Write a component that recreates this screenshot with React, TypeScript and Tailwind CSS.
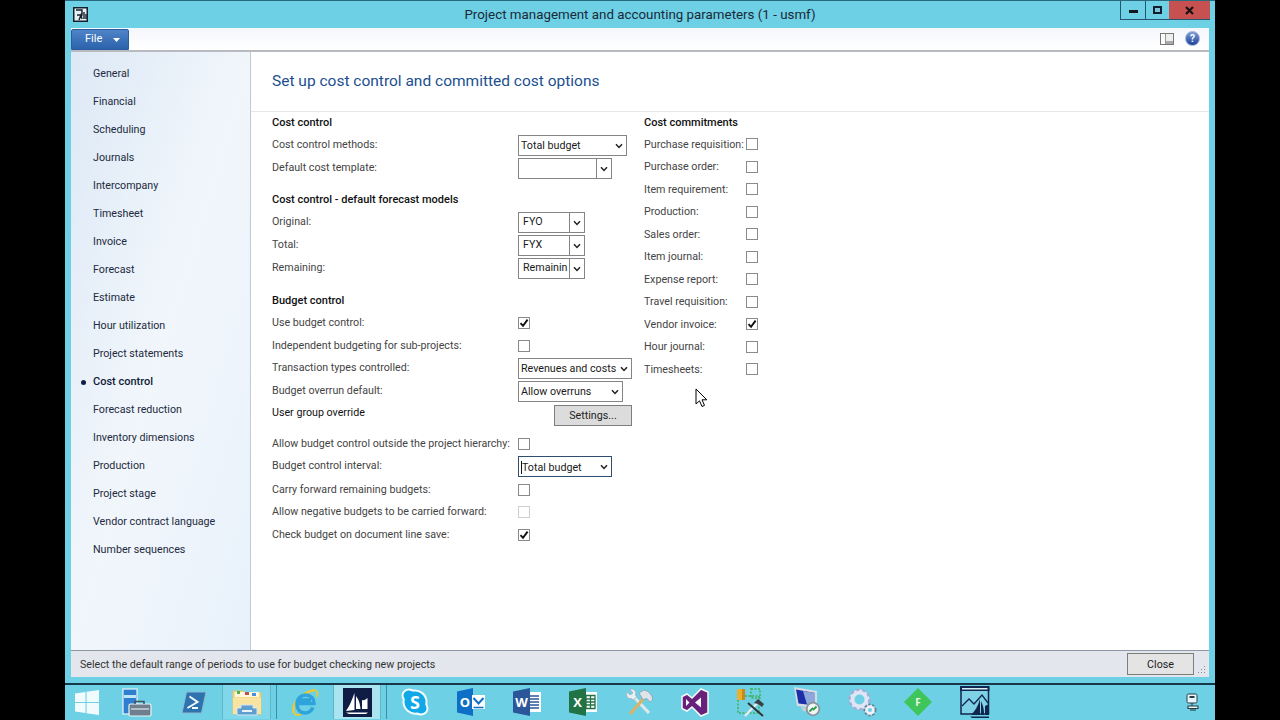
import React from "react";

const font = "font-['Roboto','Open_Sans',sans-serif]";

const sideItems = [
  "General",
  "Financial",
  "Scheduling",
  "Journals",
  "Intercompany",
  "Timesheet",
  "Invoice",
  "Forecast",
  "Estimate",
  "Hour utilization",
  "Project statements",
  "Cost control",
  "Forecast reduction",
  "Inventory dimensions",
  "Production",
  "Project stage",
  "Vendor contract language",
  "Number sequences",
];

const commitments: [string, boolean][] = [
  ["Purchase requisition:", false],
  ["Purchase order:", false],
  ["Item requirement:", false],
  ["Production:", false],
  ["Sales order:", false],
  ["Item journal:", false],
  ["Expense report:", false],
  ["Travel requisition:", false],
  ["Vendor invoice:", true],
  ["Hour journal:", false],
  ["Timesheets:", false],
];

function Chevron() {
  return (
    <svg width="8" height="6" viewBox="0 0 8 6" className="shrink-0">
      <path d="M1 1.2 L4 4.4 L7 1.2" fill="none" stroke="#222" strokeWidth="1.5" />
    </svg>
  );
}

function Check({ checked, disabled }: { checked?: boolean; disabled?: boolean }) {
  return (
    <div
      className={
        "w-[12px] h-[12px] border bg-white flex items-center justify-center shrink-0 " +
        (disabled ? "border-[#d0d0d0]" : "border-[#8a8a8a]")
      }
    >
      {checked && (
        <svg width="10" height="10" viewBox="0 0 10 10">
          <path d="M1.5 5.2 L4 7.8 L8.6 1.6" fill="none" stroke="#111" strokeWidth="1.9" />
        </svg>
      )}
    </div>
  );
}

// plain dropdown, arrow only
function Select({ text, w, focus }: { text: string; w: string; focus?: boolean }) {
  return (
    <div
      className={
        "h-[21px] border bg-white flex items-center justify-between pl-[2px] pr-[3px] text-[#1a1a1a] whitespace-nowrap " +
        w +
        (focus ? " border-[#2e4f6e]" : " border-[#858585]")
      }
    >
      {focus ? (
        <span className="border-l border-[#111] leading-[13px] mt-[2px]">{text}</span>
      ) : (
        <span className="mt-[2px]">{text}</span>
      )}
      <Chevron />
    </div>
  );
}

// lookup field, with the split before the arrow
function Lookup({ text, w, input }: { text: string; w: string; input: string }) {
  return (
    <div className={"h-[21px] border border-[#858585] bg-white flex items-center text-[#1a1a1a] " + w}>
      <div className={"pl-[4px] whitespace-nowrap " + input}>{text}</div>
      <div className="h-full border-l border-[#858585] flex-1 flex items-center justify-center">
        <Chevron />
      </div>
    </div>
  );
}

function Row({ label, children, className }: { label: string; children: React.ReactNode; className?: string }) {
  return (
    <div className={"h-[21px] flex items-center " + (className || "")}>
      <div className="w-[246px] text-[#444] whitespace-nowrap pt-[1px]">{label}</div>
      {children}
    </div>
  );
}

function ComboRow({ label, children }: { label: string; children: React.ReactNode }) {
  return (
    <div className="h-[21px] flex items-center">
      <div className="w-[246px] text-[#444] whitespace-nowrap">{label}</div>
      {children}
    </div>
  );
}

function Heading({ text, className }: { text: string; className?: string }) {
  return <div className={"h-[21px] pt-[1px] flex items-center font-medium text-[11px] text-[#111] " + (className || "")}>{text}</div>;
}

/* ---------- taskbar icons ---------- */

const StartIcon = () => (
  <svg width="24" height="25" viewBox="0 0 24 25">
    <path d="M0 3.6 10.5 2V12H0ZM11.6 1.8 24 0V12H11.6ZM0 13.1H10.5V23L0 21.5ZM11.6 13.1H24V25L11.6 23.2Z" fill="#f1fafd" />
  </svg>
);

const ServerIcon = () => (
  <svg width="30" height="29" viewBox="0 0 30 29">
    <rect x="1" y="1" width="14" height="25" fill="#2f7fd0" stroke="#e8f6fb" strokeWidth="1.2" />
    <rect x="2" y="7" width="12" height="3" fill="#bfe6f5" />
    <rect x="7" y="16" width="22" height="12" rx="1.5" fill="#6f7f8e" stroke="#e8f6fb" strokeWidth="1.2" />
    <path d="M13 16V13.5H22V16" fill="none" stroke="#44525e" strokeWidth="1.5" />
    <path d="M9 21H27" stroke="#dfe6ea" strokeWidth="1.2" />
  </svg>
);

const PowerShellIcon = () => (
  <svg width="26" height="23" viewBox="0 0 26 23">
    <path d="M5.5 1H25L20.5 22H1Z" fill="#2e73ad" stroke="#8fb8d6" strokeWidth="1" />
    <path d="M8.5 5.5 16.5 11 6.5 17M11 17H17" fill="none" stroke="#f2fbff" strokeWidth="2" />
  </svg>
);

const ExplorerIcon = () => (
  <svg width="30" height="28" viewBox="0 0 30 28">
    <path d="M1 3H11L13 5H29V26H1Z" fill="#f6dc8c" stroke="#e1c66e" />
    <rect x="3" y="4" width="24" height="5" fill="#fff8dc" />
    <rect x="5" y="3" width="3" height="3" fill="#4caf50" />
    <rect x="13" y="4" width="4" height="3" fill="#c0504d" />
    <rect x="20" y="5" width="4" height="3" fill="#4a90d9" />
    <path d="M1 10H29V26H1Z" fill="#f9e3a0" />
    <path d="M5 27V20H9V17H21V20H25V27Z" fill="#5f9fd0" stroke="#cfe6f4" />
    <rect x="10" y="22" width="10" height="2" fill="#e6f3fb" />
  </svg>
);

const IEIcon = () => (
  <svg width="28" height="29" viewBox="0 0 28 29">
    <path d="M3 25C0 18 8 5 24 2" fill="none" stroke="#e8c93a" strokeWidth="2.5" />
    <path d="M24 2C27 3 27 7 25.5 9M3 25C5 28 9 27 12 25" fill="none" stroke="#e8c93a" strokeWidth="1.8" />
    <path d="M22 19.5C20 23.5 17 25 14 25C9 25 6 21 6 16C6 10.5 10 7 14.5 7C19.5 7 23 10.5 23 15.5H8M8 12H20" fill="none" stroke="#2ea3dc" strokeWidth="3.6" />
  </svg>
);

const DynamicsIcon = () => (
  <svg width="29" height="29" viewBox="0 0 29 29">
    <rect width="29" height="29" fill="#0f1d45" />
    <path d="M3 23C6 19 9 12 11.5 5V22ZM13 21V8C15 11 17 14 17.5 21ZM19 21V12C21 13 23 11.5 24.5 10V21Z" fill="#fff" />
    <path d="M3 24.5H25L23 26H6Z" fill="#fff" />
  </svg>
);

const SkypeIcon = () => (
  <svg width="28" height="28" viewBox="0 0 28 28">
    <path d="M8 1.5C10 1.5 11 2.3 12 2.6C18 1.5 25.5 6 25.5 14C25.5 15 25.3 15.6 25.3 16.5C26 18 26.5 19 26.5 20.5C26.5 24 23.5 26.5 20 26.5C18.5 26.5 17.4 26 16 25.5C9 26.5 2.5 21 2.5 14C2.5 13 2.7 12.2 2.8 11.3C2 10 1.5 9 1.5 7.5C1.5 4 4.5 1.5 8 1.5Z" fill="#10a8e6" stroke="#f2fbff" strokeWidth="2" />
    <text x="14" y="20.5" textAnchor="middle" fontSize="18" fontWeight="700" fill="#fff" fontFamily="Open Sans, sans-serif">S</text>
  </svg>
);

const OutlookIcon = () => (
  <svg width="28" height="28" viewBox="0 0 28 28">
    <path d="M16 0V28L0 24.5V3.5Z" fill="#0f6fc6" />
    <rect x="15" y="7" width="13" height="14" fill="#fff" />
    <path d="M16.5 10 21.5 15.5 26.5 10" fill="none" stroke="#0f6fc6" strokeWidth="2" />
    <path d="M16.5 19.5H26.5" stroke="#0f6fc6" strokeWidth="1.5" />
    <text x="8" y="19" textAnchor="middle" fontSize="13" fontWeight="700" fill="#fff" fontFamily="Open Sans, sans-serif">O</text>
  </svg>
);

const WordIcon = () => (
  <svg width="28" height="28" viewBox="0 0 28 28">
    <rect x="14" y="4" width="14" height="20" fill="#fff" />
    <path d="M17 8H26M17 11H26M17 14H26M17 17H26M17 20H26" stroke="#2b579a" strokeWidth="1.5" />
    <path d="M17 0V28L0 24.5V3.5Z" fill="#2b579a" />
    <text x="8.5" y="19" textAnchor="middle" fontSize="13" fontWeight="700" fill="#fff" fontFamily="Open Sans, sans-serif">W</text>
  </svg>
);

const ExcelIcon = () => (
  <svg width="28" height="28" viewBox="0 0 28 28">
    <rect x="14" y="4" width="14" height="20" fill="#fff" />
    <path d="M17 7.5H26V20.5H17ZM17 11H26M17 14H26M17 17H26M21.5 7.5V20.5" fill="none" stroke="#217346" strokeWidth="1.3" />
    <path d="M17 0V28L0 24.5V3.5Z" fill="#217346" />
    <text x="8.5" y="19" textAnchor="middle" fontSize="13" fontWeight="700" fill="#fff" fontFamily="Open Sans, sans-serif">X</text>
  </svg>
);

const ToolsIcon = () => (
  <svg width="28" height="28" viewBox="0 0 28 28">
    <path d="M8 8 24 25" stroke="#dfe7ec" strokeWidth="3.2" />
    <path d="M2 4 5 7 8 5 5 1.5C8 0 12 3 10.5 7.5L12 9 8 12 6.5 10.5C3 11.5 0.5 8 2 4Z" fill="#e9eff3" stroke="#9fb0ba" strokeWidth="0.8" />
    <path d="M5 26 20 9" stroke="#d9b366" strokeWidth="3.2" />
    <path d="M14 5 19 2 23 3.5 27 8 27.5 12 25 14 22 10.5 18 11.5Z" fill="#dde5ea" stroke="#8da0ac" strokeWidth="0.8" />
  </svg>
);

const VSIcon = () => (
  <svg width="28" height="29" viewBox="0 0 28 29">
    <path d="M20 1 27 4V25L20 28 11 19 6 23 1 20.5V8.5L6 6 11 10Z" fill="#68217a" stroke="#f4fbfd" strokeWidth="1.5" />
    <path d="M20 9.5 14 14.5 20 19.5ZM5 11V18L8.5 14.5Z" fill="#f4fbfd" />
  </svg>
);

const CubeToolIcon = () => (
  <svg width="29" height="29" viewBox="0 0 29 29">
    <rect x="1" y="8" width="21" height="17" fill="none" stroke="#3fae5a" strokeWidth="1.5" strokeDasharray="2 1.5" />
    <rect x="14" y="1" width="9" height="9" fill="none" stroke="#3fae5a" strokeWidth="1.5" strokeDasharray="2 1.5" />
    <rect x="0" y="1" width="8" height="11" rx="1.5" fill="#e8b02e" />
    <rect x="5" y="1" width="3" height="11" fill="#c88a14" />
    <path d="M8 28 22 13" stroke="#e8edf0" strokeWidth="2.4" />
    <path d="M11 15 26 28" stroke="#30343a" strokeWidth="2" />
    <path d="M17 15 21 11 27 16 25 19 21 16Z" fill="#3c4148" />
  </svg>
);

const RdpIcon = () => (
  <svg width="28" height="30" viewBox="0 0 28 30">
    <path d="M1 0 24 4V21L4 19Z" fill="#d6dde4" />
    <path d="M3 2.5 22 6V18.5L5.5 16.5Z" fill="#1c2fa8" />
    <path d="M10 4 22 6V18.5L14 17.5Z" fill="#8fa8da" />
    <path d="M8 20 18 21V25L10 24Z" fill="#c6cdd4" />
    <circle cx="20" cy="22" r="7.2" fill="#8a949c" />
    <circle cx="20" cy="22" r="5.4" fill="#f2f5f6" />
    <path d="M16.5 24.5 20 21M23.5 19.5 20 23" stroke="#2e9d45" strokeWidth="1.8" />
  </svg>
);

const GearsIcon = () => (
  <svg width="29" height="29" viewBox="0 0 29 29">
    <circle cx="11.5" cy="11.5" r="7.5" fill="none" stroke="#dfe5f4" strokeWidth="5" />
    <circle cx="11.5" cy="11.5" r="10" fill="none" stroke="#9fafd8" strokeWidth="2.6" strokeDasharray="3.4 2.8" />
    <circle cx="22" cy="22" r="3.6" fill="none" stroke="#eef2f8" strokeWidth="3" />
    <circle cx="22" cy="22" r="5.6" fill="none" stroke="#6d7f98" strokeWidth="1.8" strokeDasharray="2.2 1.8" />
  </svg>
);

const DiamondIcon = () => (
  <svg width="28" height="28" viewBox="0 0 28 28">
    <path d="M14 0 28 14 14 28 0 14Z" fill="#3fc65a" />
    <text x="14" y="17.5" textAnchor="middle" fontSize="10" fontWeight="700" fill="#eafbe9" fontFamily="Open Sans, sans-serif">F</text>
  </svg>
);

const ChartIcon = () => (
  <svg width="30" height="32" viewBox="0 0 30 32">
    <path d="M1 1.5H28.5V28H1Z" fill="#7fd2e6" stroke="#10264f" strokeWidth="1.5" />
    <rect x="0" y="0" width="29.5" height="5" fill="#10264f" />
    <rect x="2" y="2" width="25.5" height="1.5" fill="#d6eef5" />
    <path d="M2 20 9 13 14 18 22 9 28 17" fill="none" stroke="#10264f" strokeWidth="1.3" />
    <path d="M11 29C15 25 18 20 20 13V29ZM21 29V15C23 20 24 22 24 29ZM25 29V20L29 18V29Z" fill="#10264f" />
    <path d="M10 30.5H29V32H12Z" fill="#10264f" />
  </svg>
);

const TrayIcon = () => (
  <svg width="14" height="18" viewBox="0 0 14 18">
    <rect x="1" y="1" width="10" height="9" rx="1.5" fill="#e6f5f9" stroke="#2a3c44" />
    <rect x="3.5" y="3" width="5" height="2" fill="#2a3c44" />
    <path d="M6 10V13M2 13H12V15.5H2Z" fill="#e6f5f9" stroke="#2a3c44" strokeWidth="1.1" />
    <path d="M4 17H10" stroke="#2a3c44" strokeWidth="1.1" />
  </svg>
);

function Slot({ w, children, className }: { w: string; children: React.ReactNode; className?: string }) {
  return <div className={"h-full flex items-center justify-center shrink-0 " + w + " " + (className || "")}>{children}</div>;
}

export default function App() {
  return (
    <div className={"w-[1280px] h-[720px] bg-black flex justify-center overflow-hidden text-[10.7px] " + font}>
      <div className="relative w-[1150px] h-[720px] flex flex-col bg-[#6dd0e4]">
        {/* title bar */}
        <div className="h-[28px] flex items-start shrink-0 border-t border-[#2a6a80]">
          <div className="w-[95px] pl-[8px] pt-[6px]">
            <svg width="15" height="15" viewBox="0 0 15 15">
              <rect width="15" height="15" fill="#14202c" />
              <rect x="1.5" y="1.5" width="12" height="12" fill="#e8f0f4" />
              <path d="M3 3H9V8H4M6 13 8 8 9 12M11 5V12M13 7V12" fill="none" stroke="#14202c" strokeWidth="1.4" />
            </svg>
          </div>
          <div className="flex-1 text-center text-[13.35px] text-[#1a2a3a] pt-[4px] whitespace-nowrap">
            Project management and accounting parameters (1 - usmf)
          </div>
          <div className="flex h-[19px] pr-[5px]">
            <div className="w-[25px] border-b border-l border-[#23586c] flex items-center justify-center pt-[3px]">
              <div className="w-[9px] h-[3px] bg-[#10181e]" />
            </div>
            <div className="w-[24px] border-b border-l border-[#23586c] flex items-center justify-center">
              <div className="w-[9px] h-[8px] border-2 border-[#10202e] bg-[#7bc4dc]" />
            </div>
            <div className="w-[41px] bg-[#c75050] border-b border-[#23586c] flex items-center justify-center">
              <svg width="9" height="9" viewBox="0 0 9 9">
                <path d="M1 1 8 8M8 1 1 8" stroke="#1a1010" strokeWidth="2.2" />
              </svg>
            </div>
          </div>
        </div>

        {/* window body */}
        <div className="mx-[6px] flex-1 flex flex-col">
          <div className="h-[24px] shrink-0 bg-linear-to-b from-[#f4f7fc] to-[#ffffff] border-b-2 border-[#b7bbbf] flex items-start justify-between">
            <div className="w-[58px] h-[21px] mt-[1px] rounded-t-[2px] bg-linear-to-b from-[#4f84c8] to-[#2b62ab] border border-[#2c5d9f] flex items-center pl-[13px] text-white text-[11px]">
              File
              <svg width="7" height="4" viewBox="0 0 7 4" className="ml-[11px] mt-[1px]">
                <path d="M0 0H7L3.5 4Z" fill="#fff" />
              </svg>
            </div>
            <div className="flex items-center gap-[11px] pr-[9px] pt-[3px]">
              <div className="w-[14px] h-[12px] border border-[#777] bg-[#eee] flex">
                <div className="w-[5px] h-full bg-[#fafafa] border-r border-[#999]" />
                <div className="flex-1 flex items-end"><div className="w-full h-[3px] bg-[#aaa]" /></div>
              </div>
              <div className="w-[15px] h-[15px] rounded-full bg-linear-to-b from-[#7b9fd8] to-[#1f3f9a] border border-[#9fb2d0] flex items-center justify-center text-white font-bold text-[10px] leading-none">
                ?
              </div>
            </div>
          </div>

          <div className="h-[598px] shrink-0 flex bg-white">
            {/* left navigation */}
            <div className="w-[180px] shrink-0 border-r border-[#c3c9d0] pt-[8px] bg-linear-to-br from-[#dde9f6] via-[#f1f6fb] to-[#e8f1fb]">
              {sideItems.map((item) => (
                <div key={item} className="h-[28px] flex items-center text-[#1d2a40] pl-[22px]">
                  {item === "Cost control" ? (
                    <>
                      <div className="w-[5px] h-[5px] rounded-full bg-[#141e44] ml-[-12px] mr-[7px]" />
                      <span className="font-medium text-[11px] text-[#121c38] mt-[1px]">{item}</span>
                    </>
                  ) : (
                    <span className="mt-[1px]">{item}</span>
                  )}
                </div>
              ))}
            </div>

            {/* main form */}
            <div className="flex-1 flex flex-col">
              <div className="h-[60px] shrink-0 border-b border-[#e6e6e6] flex items-center pl-[21px] text-[15.5px] text-[#1b4f8f]">
                Set up cost control and committed cost options
              </div>
              <div className="flex pl-[21px]">
                <div className="w-[372px] shrink-0 flex flex-col gap-[2px]">
                  <Heading text="Cost control" />
                  <ComboRow label="Cost control methods:"><Select text="Total budget" w="w-[109px]" /></ComboRow>
                  <ComboRow label="Default cost template:"><Lookup text="" w="w-[94px]" input="w-[77px]" /></ComboRow>
                  <Heading text="Cost control - default forecast models" className="mt-[8px]" />
                  <ComboRow label="Original:"><Lookup text="FYO" w="w-[67px]" input="w-[50px]" /></ComboRow>
                  <ComboRow label="Total:"><Lookup text="FYX" w="w-[67px]" input="w-[50px]" /></ComboRow>
                  <ComboRow label="Remaining:"><Lookup text="Remainin" w="w-[67px]" input="w-[50px]" /></ComboRow>
                  <Heading text="Budget control" className="mt-[9px] !h-[20px] pt-[2px]" />
                  <Row label="Use budget control:"><Check checked /></Row>
                  <Row label="Independent budgeting for sub-projects:"><Check /></Row>
                  <ComboRow label="Transaction types controlled:"><Select text="Revenues and costs" w="w-[114px]" /></ComboRow>
                  <ComboRow label="Budget overrun default:"><Select text="Allow overruns" w="w-[105px]" /></ComboRow>
                  <div className="h-[21px] mt-[1px] flex items-start">
                    <div className="w-[282px] text-[#111]">User group override</div>
                    <button className="w-[78px] h-[21px] pt-[2px] bg-[#dcdcdc] border border-[#7d7d7d] text-[#222] text-center">Settings...</button>
                  </div>
                  <Row label="Allow budget control outside the project hierarchy:" className="mt-[5px]"><Check /></Row>
                  <ComboRow label="Budget control interval:"><Select text="Total budget" w="w-[94px]" focus /></ComboRow>
                  <Row label="Carry forward remaining budgets:"><Check /></Row>
                  <Row label="Allow negative budgets to be carried forward:" className="mt-[-1px]"><Check disabled /></Row>
                  <Row label="Check budget on document line save:"><Check checked /></Row>
                </div>
                <div className="flex flex-col">
                  <Heading text="Cost commitments" />
                  {commitments.map(([label, checked]) => (
                    <div key={label} className="h-[22.5px] flex items-center">
                      <div className="w-[102px] text-[#444] whitespace-nowrap pt-[1px]">{label}</div>
                      <Check checked={checked} />
                    </div>
                  ))}
                </div>
              </div>
            </div>
          </div>

          {/* status bar */}
          <div className="h-[27px] shrink-0 bg-[#e3e7ed] border-t border-[#8c98a6] flex items-center justify-between pl-[9px] text-[#333]">
            <span className="mt-[2px]">Select the default range of periods to use for budget checking new projects</span>
            <div className="flex items-end h-full">
              <button className="w-[67px] h-[22px] mb-[2px] pt-[2px] bg-[#e4e4e4] border border-[#7d7d7d] text-[#222] text-center">Close</button>
              <svg width="15" height="24" viewBox="0 0 15 24" className="mb-[1px]">
                <path d="M10 20h1v1h-1zM7 20h1v1H7zM4 20h1v1H4zM10 17h1v1h-1zM7 17h1v1H7zM10 14h1v1h-1z" fill="#8a8f96" />
              </svg>
            </div>
          </div>
        </div>

        <div className="h-[5px] shrink-0" />

        {/* taskbar */}
        <div className="h-[37px] shrink-0 border-t-2 border-[#17374a] flex items-center pb-[1px]">
          <Slot w="w-[43px]"><StartIcon /></Slot>
          <Slot w="w-[57px]"><ServerIcon /></Slot>
          <Slot w="w-[57px]"><PowerShellIcon /></Slot>
          <Slot w="w-[49px]" className="bg-[#80d7e9] border-x border-[#5fb6c8]"><ExplorerIcon /></Slot>
          <Slot w="w-[6px]" className="border-r border-[#3e8da0]"><span /></Slot>
          <Slot w="w-[56px]"><IEIcon /></Slot>
          <Slot w="w-[48px]" className="bg-[#a9e4f0] border-x border-[#5fb6c8]"><DynamicsIcon /></Slot>
          <Slot w="w-[6px]" className="border-r border-[#3e8da0]"><span /></Slot>
          <Slot w="w-[56px]"><SkypeIcon /></Slot>
          <Slot w="w-[56px]"><OutlookIcon /></Slot>
          <Slot w="w-[56px]"><WordIcon /></Slot>
          <Slot w="w-[56px]"><ExcelIcon /></Slot>
          <Slot w="w-[56px]"><ToolsIcon /></Slot>
          <Slot w="w-[56px]"><VSIcon /></Slot>
          <Slot w="w-[56px]"><CubeToolIcon /></Slot>
          <Slot w="w-[55px]"><RdpIcon /></Slot>
          <Slot w="w-[56px]"><GearsIcon /></Slot>
          <Slot w="w-[56px]"><DiamondIcon /></Slot>
          <Slot w="w-[57px]"><ChartIcon /></Slot>
          <div className="flex-1 flex justify-end pr-[15px]"><TrayIcon /></div>
        </div>

        {/* mouse pointer */}
        <svg width="13" height="20" viewBox="0 0 13 20" className="absolute left-[630px] top-[388px]">
          <path d="M1 1V16L4.5 12.8 7 18.5 9.5 17.4 7 11.8H11.8Z" fill="#fff" stroke="#000" strokeWidth="1" />
        </svg>
      </div>
    </div>
  );
}
